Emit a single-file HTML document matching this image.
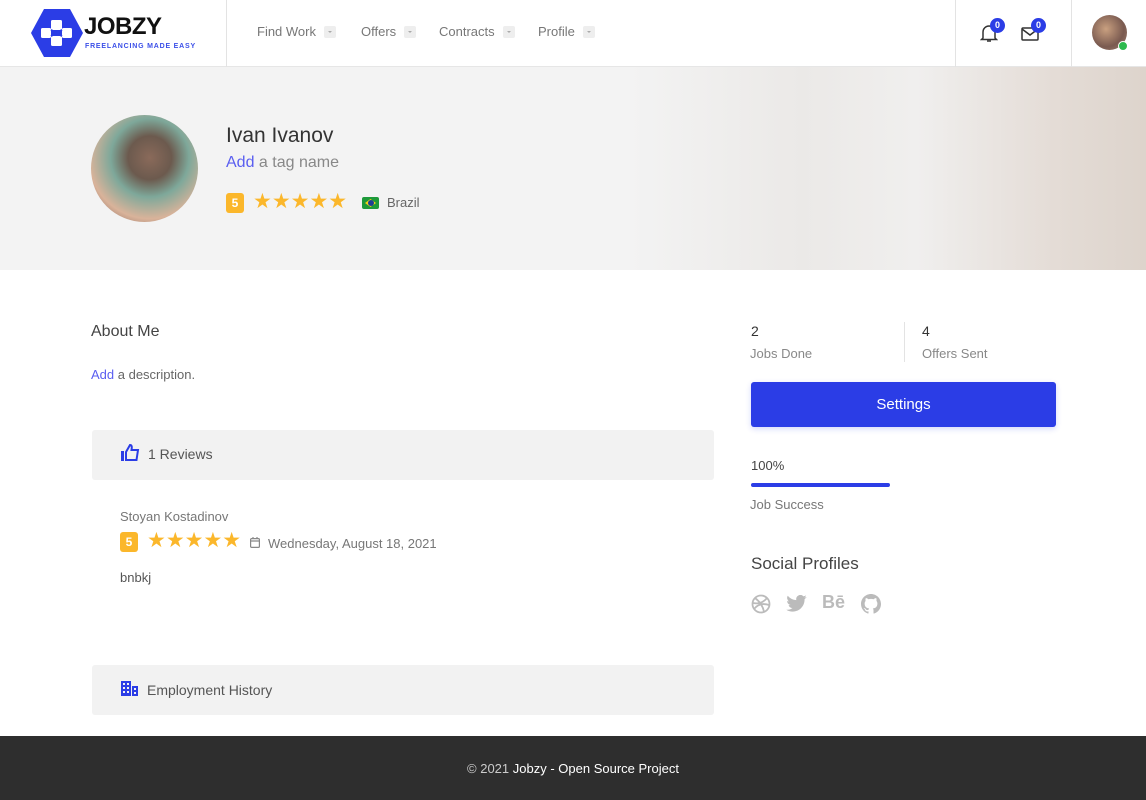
<!DOCTYPE html>
<html><head><meta charset="utf-8">
<style>
*{box-sizing:border-box;margin:0;padding:0}
body{width:1146px;height:800px;overflow:hidden;background:#fff;font-family:"Liberation Sans",sans-serif;color:#444;position:relative}
.abs{position:absolute}
.hdr{top:0;left:0;width:1146px;height:67px;background:#fff;border-bottom:1px solid #e6e6e6}
.nav{font-size:13px;color:#777;top:24px}
.dd{display:inline-block;width:12px;height:12px;background:#eee;border-radius:2px;vertical-align:middle;margin-left:8px;position:relative;top:-1px}
.dd:after{content:"";position:absolute;left:4px;top:5px;border:2px solid transparent;border-top:2px solid #aaa}
.badge{width:15px;height:15px;border-radius:50%;background:#2b3de6;color:#fff;font-size:9px;font-weight:bold;text-align:center;line-height:15px}
.hero{top:67px;left:0;width:1146px;height:203px;background:linear-gradient(90deg,#f3f3f3 0%,#f3f3f3 55%,#ebe9e7 70%,#f0efee 80%,#e4dcd6 92%,#ddd4cc 100%)}
.star{color:#fbb72b;font-size:21px;letter-spacing:0px}
.five{background:#fbb72b;color:#fff;font-weight:bold;font-size:12px;width:18px;height:20px;border-radius:3px;text-align:center;line-height:20px}
.panel{background:#f2f2f2;border-radius:3px;left:92px;width:622px;height:50px}
</style></head><body>
<div class="abs hdr"></div>
<svg class="abs" style="left:31px;top:9px" width="52" height="48" viewBox="0 0 52 48"><polygon points="13,0 39,0 52,24 39,48 13,48 0,24" fill="#2b3de6"/><g fill="#fff"><rect x="20" y="11" width="11" height="10" rx="1.5"/><rect x="20" y="27" width="11" height="10" rx="1.5"/><rect x="10" y="19" width="10" height="10" rx="1.5"/><rect x="31" y="19" width="10" height="10" rx="1.5"/></g><path d="M20 21l11 6M31 21l-11 6" stroke="#2b3de6" stroke-width="2"/></svg>
<div class="abs" style="left:84px;top:13px;font-size:24px;font-weight:bold;color:#111;letter-spacing:-0.5px">JOBZY</div>
<div class="abs" style="left:85px;top:43px;font-size:7px;font-weight:bold;color:#3b4fe8;letter-spacing:0.8px">FREELANCING MADE EASY</div>
<div class="abs" style="left:226px;top:0;width:1px;height:67px;background:#e3e3e3"></div>
<div class="abs nav" style="left:257px">Find Work<span class="dd"></span></div>
<div class="abs nav" style="left:361px">Offers<span class="dd"></span></div>
<div class="abs nav" style="left:439px">Contracts<span class="dd"></span></div>
<div class="abs nav" style="left:538px">Profile<span class="dd"></span></div>
<div class="abs" style="left:955px;top:0;width:1px;height:67px;background:#e3e3e3"></div>
<div class="abs" style="left:1071px;top:0;width:1px;height:67px;background:#e3e3e3"></div>
<svg class="abs" style="left:980px;top:24px" width="18" height="19" viewBox="0 0 18 19" fill="none" stroke="#333" stroke-width="1.5"><path d="M3 14V8a6 6 0 0 1 12 0v6l1.5 1.5h-15z"/><path d="M7 17h4"/></svg>
<div class="abs badge" style="left:990px;top:18px">0</div>
<svg class="abs" style="left:1021px;top:27px" width="18" height="14" viewBox="0 0 18 14" fill="none" stroke="#333" stroke-width="1.5"><rect x="1" y="1" width="16" height="12" rx="1"/><path d="M1 2l8 6 8-6"/></svg>
<div class="abs badge" style="left:1031px;top:18px">0</div>
<div class="abs" style="left:1092px;top:15px;width:35px;height:35px;border-radius:50%;background:radial-gradient(circle at 40% 40%,#c9a080,#7a5a50 60%,#a58575)"></div>
<div class="abs" style="left:1118px;top:41px;width:10px;height:10px;border-radius:50%;background:#2dba4e;border:1px solid #fff"></div>

<div class="abs hero"></div>
<div class="abs" style="left:91px;top:115px;width:107px;height:107px;border-radius:50%;background:radial-gradient(circle at 55% 40%,#8a6a5a 0%,#6c5a4e 25%,#7ea89a 45%,#d9b39a 70%,#6b4a44 100%)"></div>
<div class="abs" style="left:226px;top:124px;font-size:21px;color:#333">Ivan Ivanov</div>
<div class="abs" style="left:226px;top:154px;font-size:16px;color:#888"><span style="color:#5a5ef0">Add</span> a tag name</div>
<div class="abs five" style="left:226px;top:193px">5</div>
<div class="abs star" style="left:253px;top:189px">★★★★★</div>
<div class="abs" style="left:362px;top:197px;width:17px;height:12px;background:#1e9a3a;border-radius:2px"><div style="position:absolute;left:3px;top:2px;width:11px;height:8px;background:#f7d117;clip-path:polygon(50% 0,100% 50%,50% 100%,0 50%)"></div><div style="position:absolute;left:6px;top:3px;width:6px;height:6px;border-radius:50%;background:#1d3f94"></div></div>
<div class="abs" style="left:387px;top:195px;font-size:13px;color:#666">Brazil</div>

<div class="abs" style="left:91px;top:323px;font-size:16px;color:#444">About Me</div>
<div class="abs" style="left:91px;top:367px;font-size:13px;color:#666"><span style="color:#5a5ef0">Add</span> a description.</div>
<div class="abs panel" style="top:430px"></div>
<svg class="abs" style="left:120px;top:444px" width="20" height="18" viewBox="0 0 20 18" fill="none" stroke="#2b3de6" stroke-width="2"><rect x="1" y="7" width="3" height="10" fill="#2b3de6" stroke="none"/><path d="M6 8l4-7c2 0 2 2 1.5 5H18l-1.5 10H6z"/></svg>
<div class="abs" style="left:148px;top:446px;font-size:14px;color:#555">1 Reviews</div>
<div class="abs" style="left:120px;top:509px;font-size:13px;color:#777">Stoyan Kostadinov</div>
<div class="abs five" style="left:120px;top:532px">5</div>
<div class="abs star" style="left:147px;top:528px">★★★★★</div>
<svg class="abs" style="left:250px;top:537px" width="10" height="11" viewBox="0 0 10 11" fill="none" stroke="#888" stroke-width="1.2"><rect x="0.6" y="1.6" width="8.8" height="8.8" rx="1"/><path d="M0.6 4h8.8M3 0v2M7 0v2"/></svg>
<div class="abs" style="left:268px;top:536px;font-size:13px;color:#777">Wednesday, August 18, 2021</div>
<div class="abs" style="left:120px;top:570px;font-size:13px;color:#555">bnbkj</div>
<div class="abs panel" style="top:665px"></div>
<svg class="abs" style="left:121px;top:681px" width="17" height="15" viewBox="0 0 17 15" fill="#2b3de6"><path d="M0 0h10v15H0zM11 5h6v10h-6z"/><g fill="#f2f2f2"><rect x="2" y="2" width="2" height="2"/><rect x="6" y="2" width="2" height="2"/><rect x="2" y="6" width="2" height="2"/><rect x="6" y="6" width="2" height="2"/><rect x="2" y="10" width="2" height="2"/><rect x="6" y="10" width="2" height="2"/><rect x="13" y="7" width="2" height="2"/><rect x="13" y="11" width="2" height="2"/></g></svg>
<div class="abs" style="left:147px;top:682px;font-size:14px;color:#555">Employment History</div>

<div class="abs" style="left:751px;top:323px;font-size:14px;color:#333">2</div>
<div class="abs" style="left:750px;top:346px;font-size:13px;color:#888">Jobs Done</div>
<div class="abs" style="left:904px;top:322px;width:1px;height:40px;background:#e3e3e3"></div>
<div class="abs" style="left:922px;top:323px;font-size:14px;color:#333">4</div>
<div class="abs" style="left:922px;top:346px;font-size:13px;color:#888">Offers Sent</div>
<div class="abs" style="left:751px;top:382px;width:305px;height:45px;background:#2b3de6;border-radius:3px;color:#fff;font-size:15px;text-align:center;line-height:45px;box-shadow:0 2px 6px rgba(43,61,230,.2)">Settings</div>
<div class="abs" style="left:751px;top:458px;font-size:13px;color:#444">100%</div>
<div class="abs" style="left:751px;top:483px;width:139px;height:4px;border-radius:2px;background:#2b3de6"></div>
<div class="abs" style="left:750px;top:497px;font-size:13px;color:#777">Job Success</div>
<div class="abs" style="left:751px;top:554px;font-size:17px;color:#444">Social Profiles</div>
<svg class="abs" style="left:751px;top:594px" width="20" height="20" viewBox="0 0 20 20" fill="none" stroke="#bbb" stroke-width="1.8"><circle cx="10" cy="10" r="8.5"/><path d="M4 4c4 3 8 8 9 14M2 9c5 1 10 0 14-5M3 15c4-5 9-6 15-4"/></svg>
<svg class="abs" style="left:786px;top:595px" width="21" height="17" viewBox="0 0 24 20" fill="#bbb"><path d="M24 2.4a9.8 9.8 0 0 1-2.8.8A4.9 4.9 0 0 0 23.3.4a9.9 9.9 0 0 1-3.1 1.2A4.9 4.9 0 0 0 11.8 6 14 14 0 0 1 1.7.9a4.9 4.9 0 0 0 1.5 6.6A4.9 4.9 0 0 1 1 6.9v.1a4.9 4.9 0 0 0 3.9 4.8 4.9 4.9 0 0 1-2.2.1 4.9 4.9 0 0 0 4.6 3.4A9.9 9.9 0 0 1 0 17.3 14 14 0 0 0 7.5 19.5c9.1 0 14-7.5 14-14v-.6A10 10 0 0 0 24 2.4z"/></svg>
<div class="abs" style="left:822px;top:592px;font-size:18px;font-weight:bold;color:#bbb">Bē</div>
<svg class="abs" style="left:861px;top:594px" width="20" height="20" viewBox="0 0 16 16" fill="#bbb"><path d="M8 0C3.58 0 0 3.58 0 8c0 3.54 2.29 6.530 5.47 7.59.4.07.55-.17.55-.38v-1.33c-2.230.48-2.700-1.070-2.700-1.070-.36-.92-.89-1.170-.89-1.170-.73-.5.06-.49.06-.49.8.06 1.230.83 1.230.83.71 1.220 1.870.87 2.330.66.07-.52.28-.87.5-1.070-1.780-.2-3.640-.89-3.640-3.950 0-.87.31-1.590.82-2.150-.08-.2-.36-1.020.08-2.120 0 0 .67-.21 2.200.82a7.6 7.6 0 0 1 4 0c1.530-1.040 2.200-.82 2.200-.82.44 1.100.16 1.920.08 2.120.51.56.82 1.270.82 2.150 0 3.070-1.870 3.750-3.650 3.950.29.25.54.73.54 1.480v2.200c0 .21.15.46.55.38A8 8 0 0 0 16 8c0-4.420-3.580-8-8-8z"/></svg>

<div class="abs" style="left:0;top:736px;width:1146px;height:64px;background:#2e2e2e"></div>
<div class="abs" style="left:0;top:761px;width:1146px;text-align:center;font-size:13px;color:#ccc">© 2021 <span style="color:#fff">Jobzy - Open Source Project</span></div>
</body></html>
